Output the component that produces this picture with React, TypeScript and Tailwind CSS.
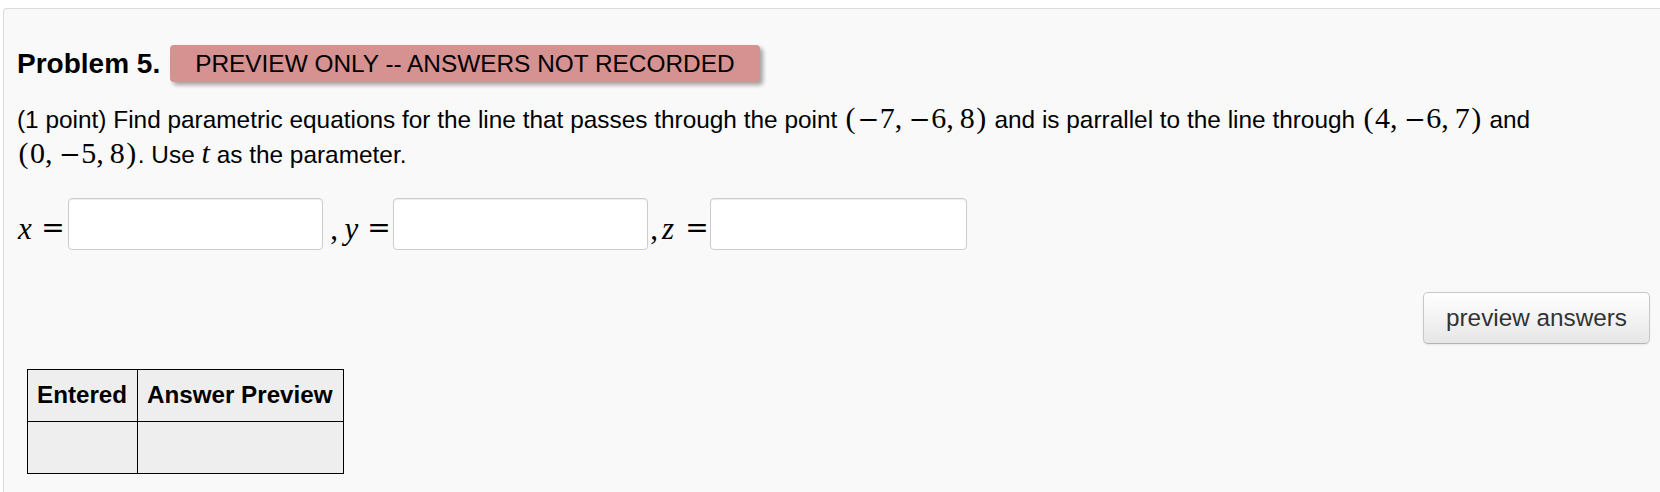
import React from "react";

const serif = "font-['Liberation_Serif','Times_New_Roman',serif]";
const opFont = "font-['DejaVu_Serif',serif]";

function Minus() {
  return <span className={`${opFont} mx-[0.5px] text-[26px]`}>−</span>;
}

function Tuple({ items }: { items: string[] }) {
  return (
    <span className={`${serif} text-[30px] leading-none whitespace-nowrap`}>
      <span className="px-[1.5px]">(</span>
      {items.map((it, i) => (
        <React.Fragment key={i}>
          {it.startsWith("-") ? (
            <>
              <Minus />
              {it.slice(1)}
            </>
          ) : (
            it
          )}
          {i < items.length - 1 && <span className="mr-[6px]">,</span>}
        </React.Fragment>
      ))}
      <span className="px-[1.5px]">)</span>
    </span>
  );
}

function Input({ w = "w-[255px]" }: { w?: string }) {
  return (
    <div
      className={`h-[52px] ${w} shrink-0 rounded-[4px] border border-[#cccccc] bg-white shadow-[inset_0_1px_1px_rgba(0,0,0,0.075)]`}
    />
  );
}

const tok = `${serif} pt-[8px] text-[31px] leading-none text-center shrink-0`;
const eq = `${opFont} pt-[8px] text-[28px] leading-none text-center shrink-0`;

export default function App() {
  return (
    <div className="min-h-[492px] bg-white pl-[3px] pt-[8px] font-['Liberation_Sans',Arial,sans-serif] text-black">
      <div className="min-h-[484px] rounded-tl-[4px] border-l border-t border-[#dcdcdc] bg-[#f9f9f9] pl-[13px] pr-[10px]">
        <div className="flex items-center gap-[10px] pt-[36px]">
          <h3 className="text-[28px] font-bold leading-[37px]">Problem 5.</h3>
          <span className="h-[37px] rounded-[4px] bg-[#d69191] px-[25px] text-[24.4px] leading-[37px] shadow-[3px_3px_4px_rgba(0,0,0,0.35)]">
            PREVIEW ONLY -- ANSWERS NOT RECORDED
          </span>
        </div>

        <p className="mt-[20px] text-[24.4px] leading-[35px]">
          (1 point) Find parametric equations for the line that passes through the point{" "}
          <Tuple items={["-7", "-6", "8"]} /> and is parrallel to the line through{" "}
          <Tuple items={["4", "-6", "7"]} /> and
          <br />
          <Tuple items={["0", "-5", "8"]} />. Use{" "}
          <span className={`${serif} text-[30px] italic leading-none`}>t</span> as the parameter.
        </p>

        <div className="mt-[26px] flex items-center">
          <span className={`${tok} w-[16px] italic`}>x</span>
          <span className={`${eq} ml-[7px] w-[26px]`}>=</span>
          <div className="ml-[2px]">
            <Input />
          </div>
          <span className={`${tok} ml-[5px] w-[12px]`}>,</span>
          <span className={`${tok} w-[23px] italic`}>y</span>
          <span className={`${eq} ml-[3px] w-[26px]`}>=</span>
          <div className="ml-[1px]">
            <Input />
          </div>
          <span className={`${tok} w-[12px]`}>,</span>
          <span className={`${tok} w-[16px] italic`}>z</span>
          <span className={`${eq} ml-[8px] w-[26px]`}>=</span>
          <div>
            <Input w="w-[257px]" />
          </div>
        </div>

        <div className="mt-[42px] flex justify-end">
          <button className="h-[52px] w-[227px] rounded-[5px] border border-[#c8c8c8] border-b-[#b3b3b3] bg-gradient-to-b from-white to-[#e6e6e6] text-[24.3px] text-[#333333] shadow-[0_1px_2px_rgba(0,0,0,0.08)]">
            preview answers
          </button>
        </div>

        <table className="ml-[10px] mt-[25px] border-collapse text-[24.2px] font-bold">
          <thead>
            <tr>
              <th className="h-[52px] w-[110px] border border-black bg-[#eeeeee] px-[9px] text-left">Entered</th>
              <th className="h-[52px] w-[206px] border border-black bg-[#eeeeee] px-[9px] text-left">Answer Preview</th>
            </tr>
          </thead>
          <tbody>
            <tr>
              <td className="h-[52px] border border-black bg-[#eeeeee]"></td>
              <td className="h-[52px] border border-black bg-[#eeeeee]"></td>
            </tr>
          </tbody>
        </table>
      </div>
    </div>
  );
}
